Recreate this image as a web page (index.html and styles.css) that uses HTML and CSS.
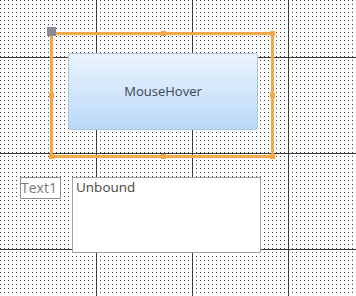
FILE: index.html
```html
<!DOCTYPE html>
<html lang="en">
<head>
  <meta charset="UTF-8">
  <title>Form Designer</title>
  <link rel="stylesheet" href="styles.css">
</head>
<body>
  <div class="surface">
    <!-- selected button with its adorner -->
    <div class="selection">
      <span class="grip"></span>
      <span class="handle h-tm"></span>
      <span class="handle h-tr"></span>
      <span class="handle h-ml"></span>
      <span class="handle h-mr"></span>
      <span class="handle h-bl"></span>
      <span class="handle h-bm"></span>
      <span class="handle h-br"></span>
    </div>
    <div class="ctl button">MouseHover</div>

    <!-- label + text box -->
    <div class="ctl label">Text1</div>
    <div class="ctl textbox">Unbound</div>
  </div>
</body>
</html>
```

FILE: styles.css
```css
body {
  margin: 0;
  font-family: "Open Sans", "Noto Sans", sans-serif;
}
/* design surface: dots every 4px, lines every 96px */
.surface {
  position: relative;
  width: 356px;
  height: 296px;
  overflow: hidden;
  background-color: #fff;
  background-image:
    repeating-linear-gradient(90deg, transparent 0 95px, #3a3a3a 95px 96px),
    linear-gradient(180deg, transparent 57px, #3a3a3a 57px, #3a3a3a 58px, transparent 58px),
    linear-gradient(90deg, #fff 3px, transparent 3px),
    linear-gradient(180deg, #fff 3px, transparent 3px),
    linear-gradient(#444, #444);
  background-size: 100% 100%, 96px 96px, 4px 4px, 4px 4px, 100% 100%;
  background-position: 1px 0, 0 0, 1px 0, 0 1px, 0 0;
  background-repeat: no-repeat, repeat, repeat, repeat, no-repeat;
}
.ctl {
  position: absolute;
  box-sizing: border-box;
}
.button {
  left: 68px;
  top: 53px;
  width: 190px;
  height: 77px;
  border: 1px solid #a7c6e2;
  border-radius: 3px;
  background: linear-gradient(#ebf4fd, #bbd9f9);
  color: #3d4350;
  font-size: 13px;
  padding-bottom: 2px;
  display: flex;
  align-items: center;
  justify-content: center;
}
/* orange adorner */
.selection {
  position: absolute;
  left: 50px;
  top: 32px;
  width: 224px;
  height: 126px;
  box-sizing: border-box;
  border: 3px solid #f5a845;
}
.grip {
  position: absolute;
  left: -6px;
  top: -8px;
  width: 9px;
  height: 9px;
  background: #8a8d95;
}
.handle {
  position: absolute;
  width: 5px;
  height: 5px;
  background: #f5a845;
}
.h-tm { left: 108px; top: -4px; }
.h-tr { right: -4px; top: -4px; }
.h-ml { left: -4px; top: 58px; }
.h-mr { right: -4px; top: 58px; }
.h-bl { left: -4px; bottom: -4px; }
.h-bm { left: 108px; bottom: -4px; }
.h-br { right: -4px; bottom: -4px; }
.label {
  left: 20px;
  top: 177px;
  width: 41px;
  height: 22px;
  border: 1px solid #8c8c8c;
  background: #fff;
  color: #7a7a7a;
  font-size: 14px;
  line-height: 19px;
}
.textbox {
  left: 72px;
  top: 177px;
  width: 189px;
  height: 76px;
  border: 1px solid #a0a0a0;
  background: #fff;
  color: #474747;
  font-size: 13.5px;
  line-height: 18px;
  padding: 0 3px;
}
```
